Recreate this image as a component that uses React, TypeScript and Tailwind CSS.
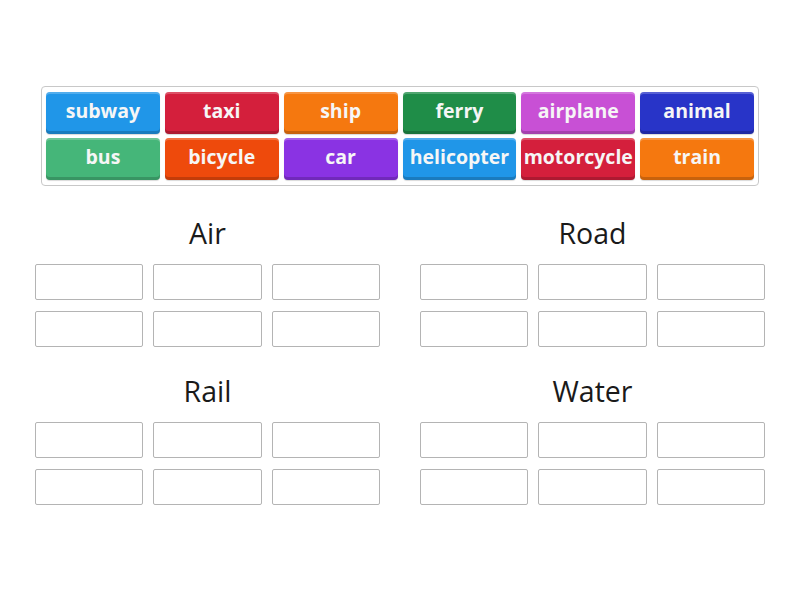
const tiles = [
  { label: "subway", color: "bg-[#2096e8]" },
  { label: "taxi", color: "bg-[#d41f3c]" },
  { label: "ship", color: "bg-[#f5780f]" },
  { label: "ferry", color: "bg-[#1f8d48]" },
  { label: "airplane", color: "bg-[#c850d5]" },
  { label: "animal", color: "bg-[#2834c8]" },
  { label: "bus", color: "bg-[#45b679]" },
  { label: "bicycle", color: "bg-[#ee4a0c]" },
  { label: "car", color: "bg-[#8a33e3]" },
  { label: "helicopter", color: "bg-[#2096e8]" },
  { label: "motorcycle", color: "bg-[#d41f3c]" },
  { label: "train", color: "bg-[#f5780f]" },
];

const groups = ["Air", "Road", "Rail", "Water"];

function Tile({ label, color }: { label: string; color: string }) {
  return (
    <div
      className={`${color} h-[42px] rounded-[4px] flex items-center justify-center pb-[5px] text-[19.5px] font-bold text-[#f6f6f6] shadow-[inset_0_-3px_0_rgba(0,0,0,0.18),inset_0_2px_0_rgba(255,255,255,0.22),0_1px_1px_rgba(0,0,0,0.15)]`}
    >
      {label}
    </div>
  );
}

function Group({ title }: { title: string }) {
  return (
    <div className="flex flex-col">
      <h2 className="text-center text-[28.5px] leading-[38px] text-[#1a1a1a] mb-[12px]">{title}</h2>
      <div className="grid grid-cols-3 gap-x-[10px] gap-y-[11px]">
        {Array.from({ length: 6 }).map((_, i) => (
          <div key={i} className="h-[36px] border border-[#b4b4b4] rounded-[2px] bg-white" />
        ))}
      </div>
    </div>
  );
}

export default function App() {
  return (
    <div
      className="w-[800px] h-[600px] bg-white pt-[86px]"
      style={{ fontFamily: '"Open Sans", "Noto Sans", sans-serif' }}
    >
      <div className="mx-auto w-[718px] border border-[#c8c8c8] rounded-[4px] px-[4px] pt-[5px] pb-[5px]">
        <div className="grid grid-cols-6 gap-x-[5px] gap-y-[4px]">
          {tiles.map((t) => (
            <Tile key={t.label} label={t.label} color={t.color} />
          ))}
        </div>
      </div>
      <div className="grid grid-cols-2 gap-x-[40px] gap-y-[25px] px-[35px] mt-[28px]">
        {groups.map((g) => (
          <Group key={g} title={g} />
        ))}
      </div>
    </div>
  );
}
